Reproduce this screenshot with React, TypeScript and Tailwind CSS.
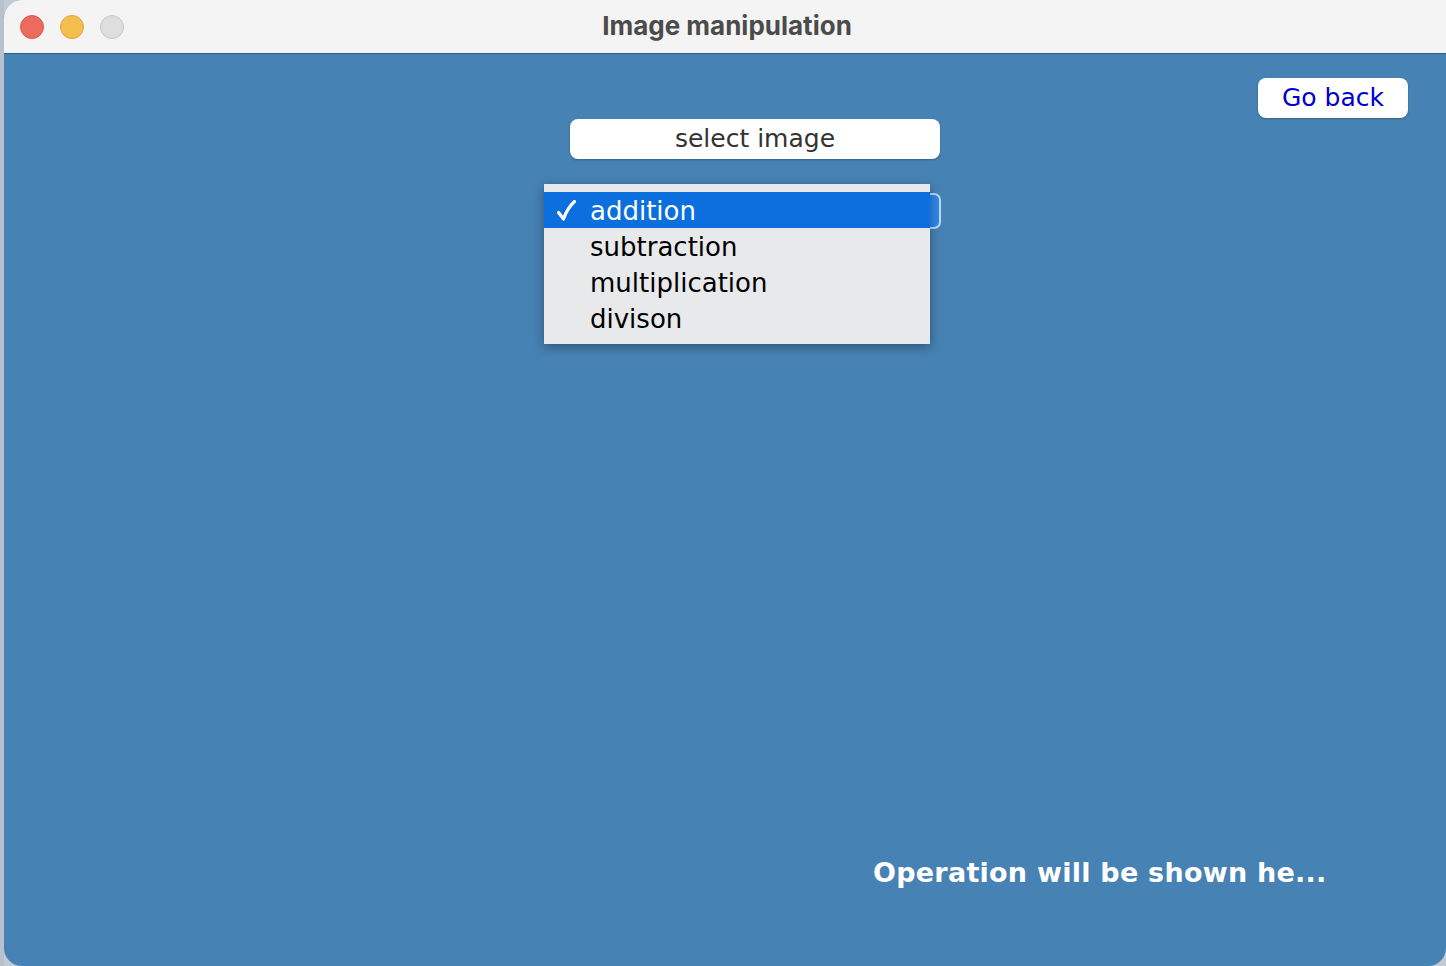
const operations = ["addition", "subtraction", "multiplication", "divison"];

// macOS style traffic light
function Light({ fill, border }: { fill: string; border: string }) {
  return (
    <span
      className={`block h-[24px] w-[24px] rounded-full border ${fill} ${border}`}
    />
  );
}

// menu check mark
function CheckMark() {
  return (
    <svg width="19" height="21" viewBox="0 0 19 21" fill="none">
      <path
        d="M1.5 12.5 L6.5 19 C9 12 12.5 6 17.5 1.5"
        stroke="white"
        strokeWidth="3.2"
        strokeLinecap="round"
        strokeLinejoin="round"
      />
    </svg>
  );
}

export default function App() {
  const lucida = { fontFamily: '"DejaVu Sans", "Liberation Sans", sans-serif' };

  return (
    <div className="flex h-[966px] w-[1446px] overflow-hidden bg-[#c3cad3]">
      {/* strip of the window behind */}
      <div className="w-[4px] shrink-0 bg-[#b9c2cc]" />

      {/* window */}
      <div className="flex flex-1 flex-col overflow-hidden rounded-tl-[18px] rounded-bl-[18px] rounded-br-[18px] bg-[#4682b4]">
        {/* title bar */}
        <div className="relative flex h-[54px] shrink-0 items-center border-b border-[#285e8f] bg-[#f4f4f4]">
          <div className="flex items-center gap-[16px] pl-[16px]">
            <Light fill="bg-[#ee6a5f]" border="border-[#d55a50]" />
            <Light fill="bg-[#f5bf4f]" border="border-[#dca43c]" />
            <Light fill="bg-[#dedede]" border="border-[#c6c6c6]" />
          </div>
          <div
            className="absolute left-0 right-0 top-0 flex h-[50px] items-center justify-center pl-[4px] text-[26px] font-bold text-[#4b4b4b]"
            style={{ fontFamily: 'Inter, "Liberation Sans", sans-serif' }}
          >
            Image manipulation
          </div>
        </div>

        {/* content */}
        <div className="relative flex flex-1 flex-col" style={lucida}>
          <div className="flex justify-end pr-[38px] pt-[24px]">
            <button className="flex h-[40px] w-[150px] items-center justify-center rounded-[8px] bg-white text-[25px] text-[#0000cc] shadow-[0_1px_2px_rgba(0,0,0,0.25)]">
              Go back
            </button>
          </div>

          <div className="flex pl-[566px]">
            <button className="mt-[1px] flex h-[40px] w-[370px] items-center justify-center rounded-[8px] bg-white text-[25px] text-[#333333] shadow-[0_1px_2px_rgba(0,0,0,0.25)]">
              select image
            </button>
          </div>

          {/* combobox with its popup open */}
          <div className="relative ml-[540px] mt-[34px] h-[36px] w-[397px]">
            <div className="absolute right-0 top-0 h-[36px] w-[40px] rounded-[7px] border-2 border-[#bcd8f5] bg-[#2f86ea]" />
            <div className="absolute -top-[9px] left-0 w-[386px] bg-[#e8e9eb] py-[8px] shadow-[0_3px_10px_rgba(0,0,0,0.35)]">
              {operations.map((op, i) => (
                <div
                  key={op}
                  className={`flex h-[36px] items-center pt-[3px] text-[26px] ${
                    i === 0 ? "bg-[#0b6fdd] text-white" : "text-black"
                  }`}
                >
                  <span className="flex w-[46px] justify-start pl-[13px] pb-[3px]">
                    {i === 0 && <CheckMark />}
                  </span>
                  <span>{op}</span>
                </div>
              ))}
            </div>
          </div>

          <div className="flex-1" />

          <div className="flex pb-[73px] pl-[869px]">
            <span className="text-[27px] font-bold tracking-[0.25px] text-white">
              Operation will be shown he...
            </span>
          </div>
        </div>
      </div>
    </div>
  );
}
